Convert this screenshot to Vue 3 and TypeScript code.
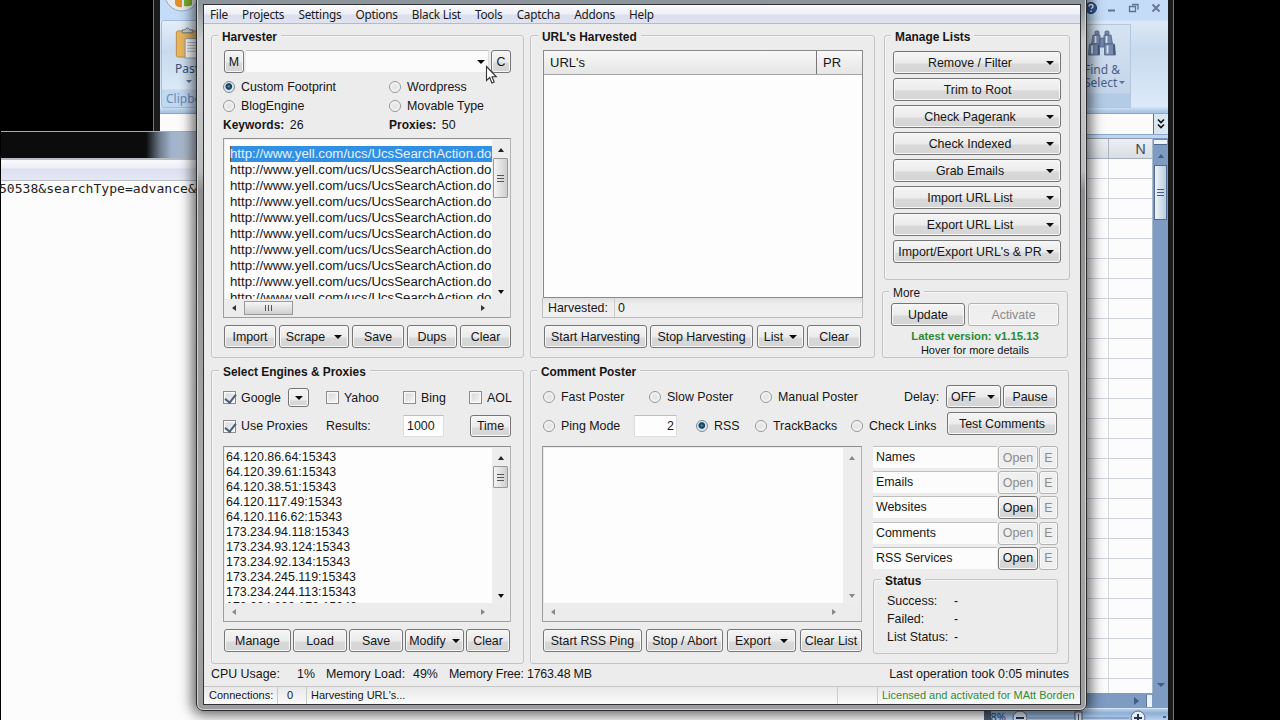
<script setup lang="ts">
interface ManageAction { label: string; menu: boolean }
interface FileRow { label: string; enabled: boolean }

const menus: string[] = ['File', 'Projects', 'Settings', 'Options', 'Black List', 'Tools', 'Captcha', 'Addons', 'Help']
const urls: string[] = Array.from({ length: 10 }, () => 'http://www.yell.com/ucs/UcsSearchAction.do')
const proxies: string[] = [
  '64.120.86.64:15343', '64.120.39.61:15343', '64.120.38.51:15343', '64.120.117.49:15343',
  '64.120.116.62:15343', '173.234.94.118:15343', '173.234.93.124:15343', '173.234.92.134:15343',
  '173.234.245.119:15343', '173.234.244.113:15343', '173.234.232.173:15343',
]
const manage: ManageAction[] = [
  { label: 'Remove / Filter', menu: true },
  { label: 'Trim to Root', menu: false },
  { label: 'Check Pagerank', menu: true },
  { label: 'Check Indexed', menu: true },
  { label: 'Grab Emails', menu: true },
  { label: 'Import URL List', menu: true },
  { label: 'Export URL List', menu: true },
  { label: "Import/Export URL's & PR", menu: true },
]
const files: FileRow[] = [
  { label: 'Names', enabled: false },
  { label: 'Emails', enabled: false },
  { label: 'Websites', enabled: true },
  { label: 'Comments', enabled: false },
  { label: 'RSS Services', enabled: true },
]
</script>

<template>
  <div class="desktop">
    <!-- Spreadsheet window -->
    <div class="excel">
      <div class="ribbon">
        <div class="clip-group">
          <svg class="orb" width="36" height="24" viewBox="0 0 36 24">
            <circle cx="18" cy="-6" r="17" fill="#e9ecef" stroke="#9aa9bd" />
            <path d="M11 0h7v7q-5 1-7-3z" fill="#e0912a" /><path d="M20 0h8v5q-4 2-8 1z" fill="#7fae2f" />
          </svg>
          <svg class="paste-icon" width="26" height="34" viewBox="0 0 26 34">
            <rect x="1" y="4" width="23" height="27" rx="2" fill="#e8b65c" stroke="#c08c3b" />
            <path d="M7 6V3h3q2-4 5 0h3v3z" fill="#c9cdd2" stroke="#6d7278" />
            <path d="M10 12h15v20H10z" fill="#fbfcfe" stroke="#8c9cb0" />
            <path d="M12 16h12M12 19h12M12 22h12M12 25h12" stroke="#b2bdca" />
          </svg>
          <span class="paste">Paste</span>
          <i class="tri tiny" />
          <span class="clipb">Clipboard</span>
        </div>
        <div class="ribbon-right">
          <div class="win-ctl">
            <svg width="90" height="16" viewBox="0 0 90 16">
              <circle cx="8" cy="8" r="5.5" fill="#315a9b" stroke="#1d3c74" />
              <path d="M6 6.5q0-2 2-2t2 2q0 1-2 2.2M8 10.5v1.4" fill="none" stroke="#fff" stroke-width="1.4" />
              <path d="M25 10.5h7" stroke="#5d7396" stroke-width="2" />
              <path d="M49 4.5h6v5M46.500 6.500h6v5h-6z" fill="none" stroke="#5d7396" stroke-width="1.300" />
              <path d="M69.500 4.500l7 7M76.500 4.500l-7 7" stroke="#66758c" stroke-width="1.800" />
            </svg>
          </div>
          <div class="find-panel">
            <svg width="32" height="28" viewBox="0 0 32 28">
              <g fill="#7589aa" stroke="#4f628a" stroke-width=".8">
                <rect x="8" y="1" width="4" height="4" rx="1" /><rect x="18" y="1" width="4" height="4" rx="1" />
                <path d="M6 5h7v9H4.500z" /><path d="M17 5h7l1.500 9H17z" />
                <path d="M2.500 14h10v11h-11z" /><path d="M17.500 14h10l1 11h-11z" />
                <path d="M13 8h4v9h-4z" />
              </g>
              <path d="M5 15.500v8M20.500 15.500v8M8.500 6v7M19.500 6v7" stroke="#dbe4f1" stroke-width="1.800" />
              <path d="M11.500 15v9.500M27 15v9.500" stroke="#3d5078" stroke-width="1.500" />
            </svg>
            <span>Find &amp;</span>
            <span class="sel">Select <i class="tri tiny" /></span>
          </div>
        </div>
      </div>
      <div class="formula"><b><svg width="10" height="12" viewBox="0 0 10 12"><path d="M2 1.500l3 3 3-3M2 6.500l3 3 3-3" fill="none" stroke="#111" stroke-width="1.600" /></svg></b></div>
      <div class="sheet">
        <div class="cells"><div class="head">N</div></div>
        <div class="vbar">
          <div class="split" />
          <i class="tri up blue" />
          <div class="vthumb"><i /><i /><i /></div>
          <i class="tri blue down" />
        </div>
      </div>
      <div class="hbar"><i class="rt" /><b /></div>
      <div class="zoom-bar">
        <span>8%</span>
        <svg width="170" height="12" viewBox="0 0 170 12">
          <circle cx="20" cy="9" r="7" fill="#e0e8f3" stroke="#54688a" /><path d="M16 9h8" stroke="#24364f" stroke-width="2" />
          <path d="M28 9h101" stroke="#6a82a8" />
          <rect x="75" y="3" width="7" height="10" fill="#d5deea" stroke="#43536c" /><path d="M78.500 5v6" stroke="#43536c" />
          <circle cx="138" cy="9" r="7" fill="#e6edf6" stroke="#54688a" /><path d="M134 9h8M138 5v8" stroke="#24364f" stroke-width="2" />
          <path d="M163 8h3" stroke="#4d6488" stroke-width="2" />
        </svg>
      </div>
    </div>

    <!-- Text editor window -->
    <div class="notepad">
      <div class="np-title" />
      <div class="np-menu" />
      <div class="np-body">50538&amp;searchType=advance&amp;</div>
    </div>

    <!-- Main application window -->
    <div class="frame">
      <div class="client">
        <nav class="menubar"><span v-for="m in menus" :key="m">{{ m }}</span></nav>

        <main class="body">
          <section class="group harvester">
            <h3>Harvester</h3>
            <div class="combo-row">
              <button>M</button>
              <div class="combo"><i class="tri" /></div>
              <button>C</button>
            </div>
            <div class="options">
              <label><i class="radio on" />Custom Footprint</label>
              <label><i class="radio" />Wordpress</label>
              <label><i class="radio" />BlogEngine</label>
              <label><i class="radio" />Movable Type</label>
              <p><b>Keywords:</b> 26</p>
              <p><b>Proxies:</b> 50</p>
            </div>
            <div class="list urls">
              <div class="lines"><div v-for="(u, i) in urls" :key="i" :class="{ picked: i === 0 }">{{ u }}</div></div>
              <div class="vs"><i class="tri up small" /><div class="thumb"><s /><s /><s /></div><i class="tri small end" /></div>
              <div class="hs"><i class="lt" /><div class="hthumb"><s /><s /><s /></div><i class="rt" /></div>
            </div>
            <div class="btns b1">
              <button>Import</button><button class="dd">Scrape<i class="tri" /></button><button>Save</button><button>Dups</button><button>Clear</button>
            </div>
          </section>

          <section class="group harvested">
            <h3>URL's Harvested</h3>
            <div class="table">
              <div class="thead"><span>URL's</span><span>PR</span></div>
            </div>
            <div class="count"><span>Harvested:</span><span>0</span></div>
            <div class="btns b2">
              <button>Start Harvesting</button><button>Stop Harvesting</button><button class="dd">List<i class="tri" /></button><button>Clear</button>
            </div>
          </section>

          <div class="side">
            <section class="group manage">
              <h3>Manage Lists</h3>
              <button v-for="a in manage" :key="a.label" :class="{ menu: a.menu }"><span>{{ a.label }}</span><i v-if="a.menu" class="tri" /></button>
            </section>
            <section class="group more">
              <h3>More</h3>
              <div class="more-btns"><button>Update</button><button disabled>Activate</button></div>
              <strong>Latest version: v1.15.13</strong>
              <em>Hover for more details</em>
            </section>
          </div>

          <section class="group engines">
            <h3>Select Engines &amp; Proxies</h3>
            <div class="checks">
              <label><i class="check on" />Google</label>
              <button><i class="tri" /></button>
              <label><i class="check" />Yahoo</label>
              <label><i class="check" />Bing</label>
              <label><i class="check" />AOL</label>
            </div>
            <div class="checks second">
              <label class="wide"><i class="check on" />Use Proxies</label>
              <span>Results:</span>
              <div class="field">1000</div>
              <button>Time</button>
            </div>
            <div class="list proxies">
              <div class="lines"><div v-for="p in proxies" :key="p">{{ p }}</div></div>
              <div class="vs"><i class="tri up small" /><div class="thumb short"><s /><s /><s /></div><i class="tri small end" /></div>
              <div class="hs dim"><i class="lt" /><i class="rt" /></div>
            </div>
            <div class="btns b3">
              <button>Manage</button><button>Load</button><button>Save</button><button class="dd tight">Modify<i class="tri" /></button><button>Clear</button>
            </div>
          </section>

          <section class="group poster">
            <h3>Comment Poster</h3>
            <div class="modes">
              <div class="mode-rows">
                <div class="mr1">
                  <label><i class="radio" />Fast Poster</label>
                  <label><i class="radio" />Slow Poster</label>
                  <label><i class="radio" />Manual Poster</label>
                  <span>Delay:</span>
                </div>
                <div class="mr2">
                  <label><i class="radio" />Ping Mode</label>
                  <div class="field num">2</div>
                  <label><i class="radio on" />RSS</label>
                  <label><i class="radio" />TrackBacks</label>
                  <label><i class="radio" />Check Links</label>
                </div>
              </div>
              <div class="mode-btns">
                <button class="off">OFF<i class="tri" /></button><button>Pause</button>
                <button class="test">Test Comments</button>
              </div>
            </div>
            <div class="poster-main">
              <div class="poster-left">
                <div class="list blank">
                  <div class="lines" />
                  <div class="vs dim"><i class="tri up small" /><i class="tri small end" /></div>
                  <div class="hs dim"><i class="lt" /><i class="rt" /></div>
                </div>
                <div class="btns b4">
                  <button>Start RSS Ping</button><button>Stop / Abort</button><button class="dd">Export<i class="tri" /></button><button>Clear List</button>
                </div>
              </div>
              <div class="poster-right">
                <div class="files">
                  <template v-for="f in files" :key="f.label">
                    <div class="fname">{{ f.label }}</div>
                    <button :disabled="!f.enabled">Open</button>
                    <button disabled>E</button>
                  </template>
                </div>
                <section class="group status">
                  <h3>Status</h3>
                  <dl>
                    <dt>Success:</dt><dd>-</dd>
                    <dt>Failed:</dt><dd>-</dd>
                    <dt>List Status:</dt><dd>-</dd>
                  </dl>
                </section>
              </div>
            </div>
          </section>
        </main>

        <div class="usage">
          <span>CPU Usage:</span><span>1%</span><span>Memory Load:</span><span>49%</span><span class="free">Memory Free: 1763.48 MB</span><span>Last operation took 0:05 minutes</span>
        </div>
        <footer class="statusbar">
          <span>Connections:</span><span>0</span><span>Harvesting URL's...</span><span /><span class="lic">Licensed and activated for MAtt Borden</span>
        </footer>
      </div>
    </div>

    <svg class="cursor" width="14" height="20" viewBox="0 0 14 20">
      <path d="M1.500 1.500v14l3.200-3 2.200 5.500 2.300-1-2.200-5.200h4.300z" fill="#fff" stroke="#333" stroke-width="1.100" />
    </svg>
  </div>
</template>

<style>
body { margin: 0; background: #000; overflow: hidden; }
</style>

<style scoped>
* { box-sizing: border-box; }
.desktop { position: relative; width: 1280px; height: 720px; overflow: hidden; background: #000; font: 12.4px/16px "Liberation Sans", Arial, sans-serif; color: #161616; }
h3, p, dl, dd { margin: 0; }
i { font-style: normal; }

/* arrows */
.tri { display: inline-block; width: 0; height: 0; border: 4px solid transparent; border-top-color: #0c0c0c; border-bottom: 0; flex: none; }
.tri.small { border-width: 4px 3.500px 0; }
.tri.up { border-width: 0 3.500px 4px; border-bottom: 4px solid #222; border-top: 0; }
.tri.tiny { border-width: 3px 3px 0; border-top-color: #58739d; }
.tri.blue { border-top-color: #3f5d8b; }
.tri.up.blue { border-bottom-color: #3f5d8b; }
.lt, .rt { width: 0; height: 0; border: 3.500px solid transparent; flex: none; }
.lt { border-right: 4px solid #333; border-left: 0; }
.rt { border-left: 4px solid #333; border-right: 0; }
.dim .lt { border-right-color: #888; }
.dim .rt { border-left-color: #888; }
.dim .tri.small { border-top-color: #888; }
.dim .tri.up { border-bottom-color: #888; }

/* spreadsheet */
.excel { position: absolute; left: 153px; top: -4px; width: 1021px; height: 740px; border: solid #1b1b1b; border-width: 0 6px 0 7px; outline: 1px solid #777; outline-offset: -1px; background: #bfd4ee; padding-top: 4px; font-family: "Noto Sans", sans-serif; }
.ribbon { height: 113px; display: flex; justify-content: space-between; background: linear-gradient(#c4dcf8 0 20px, #dbe8f6 21px, #c9daee 50px, #dceafa 106px, #a9c5e5 112px); }
.clip-group { width: 120px; height: 88px; margin: 20px 0 0 1px; border: 1px solid #a4bddb; border-radius: 3px; background: linear-gradient(#e4eef9, #c8daee 30px, #dbe9f7 68px, #c0d8f0 69px); display: flex; flex-direction: column; align-items: flex-start; position: relative; color: #35517f; }
.orb { position: absolute; left: 2px; top: -21px; }
.paste-icon { margin: 6px 0 0 13px; }
.paste { margin: 1px 0 0 13px; font-size: 12px; }
.clip-group > .tri { margin: 3px 0 0 24px; }
.clipb { margin: 8px 0 0 4px; font-size: 12px; color: #6b8ab8; }
.ribbon-right { width: 85px; }
.win-ctl { height: 24px; margin-left: 0; }
.find-panel { width: 48px; height: 84px; border: 1px solid #b5c7dc; background: linear-gradient(#d6e3f2, #c3d5ea 68px, #b3cbe5 69px); display: flex; flex-direction: column; font-size: 12px; line-height: 13px; color: #4b6189; }
.find-panel svg { margin: 5px 0 5px 3px; }
.find-panel span { white-space: nowrap; }
.find-panel .sel .tri { margin: 0 0 3px -1px; }
.formula { height: 22px; border: solid #8ba7c9; border-width: 1px 0; background: #fbfbfb; display: flex; justify-content: flex-end; }
.formula b { width: 15px; border-left: 1px solid #56719a; background: #dbe6f3; display: flex; align-items: center; justify-content: center; }
.sheet { height: 558px; padding-top: 3px; display: grid; grid-template-columns: 1fr 15px; }
.cells { border-right: 1px solid #a9b9cc; border-top: 1px solid #8f9baa; background:
  linear-gradient(#d3d9e1, #d3d9e1) 948px 0 / 1px 100% no-repeat,
  repeating-linear-gradient(#fcfcfd 0 19px, #cdd2d9 19px 20px); }
.head { height: 20px; padding: 0 6px 0 0; text-align: right; font: 14px/19px "Noto Sans", sans-serif; color: #444; border-bottom: 1px solid #a6b0bd; background: linear-gradient(90deg, transparent 948px, #aab3bf 948px 949px, transparent 949px), linear-gradient(#eceff2, #d9dee4); }
.vbar { background: #7e9bc2; display: flex; flex-direction: column; align-items: center; }
.split { width: 13px; height: 6px; margin-top: 1px; background: #eef3f9; border-bottom: 1px solid #4d6993; border-top: 1px solid #6e8ab2; }
.vbar .up { margin-top: 9px; }
.vthumb { width: 13px; height: 55px; margin-top: 7px; border: 1px solid #516c96; background: linear-gradient(90deg, #f0f4fa, #b9cbe0); display: flex; flex-direction: column; align-items: center; justify-content: center; gap: 2px; }
.vthumb i { width: 7px; height: 1px; background: #435c84; }
.vbar .down { margin-top: auto; margin-bottom: 6px; }
.hbar { height: 15px; background: #7e9bc2; display: flex; justify-content: flex-end; align-items: center; padding-right: 16px; gap: 7px; }
.hbar .rt { border-width: 4px 0 4px 5px; border-left-color: #3f5d8b; }
.hbar b { width: 6px; height: 12px; background: #edf3fa; border-left: 1px solid #5d789f; }
.zoom-bar { height: 20px; background: linear-gradient(#b9d0ec, #8daed6 4px, #bfd5ef 12px); border-top: 1px solid #d8e6f6; display: flex; justify-content: flex-end; padding-right: 0; font-size: 11px; color: #244272; }
.zoom-bar svg { margin-left: -6px; margin-right: -2px; }
.zoom-bar span { line-height: 15px; }

/* text editor */
.notepad { position: absolute; left: 1px; top: 131px; width: 990px; height: 600px; border: 1px solid #aaa; border-width: 1px 7px 0 0; border-right-color: #4a5a72; background: #fcfcfc; }
.np-title { height: 28px; border-bottom: 2px solid #b8bcc2; background: linear-gradient(90deg, #0c0c0c 145px, #6f7c8c 159px, #9fb2cb 170px, #b7c2d1 196px); }
.np-menu { height: 21px; background: linear-gradient(#fafafd, #eceef7 8px, #dcdff0 9px, #e3e6f3 18px); border-bottom: 1px solid #b9bcc9; }
.np-body { margin-left: -2px; font: 13.080px/15px "DejaVu Sans Mono", monospace; color: #222; white-space: pre; }

/* app window */
.frame { position: absolute; left: 196px; top: -20px; width: 891px; height: 731px; border: 1px solid #2a2a2a; border-radius: 0 0 7px 7px; padding: 23px 5px 7px 6px; background: linear-gradient(#8a9298 0, #8c959b 24px, #c9cbcc 60px, #b9babb 190px, #8e8e90 210px, #aaa 500px, #9c9c9e); box-shadow: inset 0 0 0 1px #d0d2d4, 0 0 13px 4px rgba(0, 0, 0, .6); }
.client { height: 701px; border: 1px solid #303236; background: #ececec; display: flex; flex-direction: column; }
.menubar { height: 19px; flex: none; display: flex; padding-left: 6px; gap: 14.200px; background: linear-gradient(#fbfbfd 0, #eef0f7 9px, #dbdfee 10px, #e0e4f1 18px); border-bottom: 1px solid #b6bac6; font: 11.800px/19px "Noto Sans", sans-serif; letter-spacing: -.25px; color: #1a1a1a; white-space: nowrap; }
.body { flex: none; height: 640px; padding: 11px 0 0 7px; display: grid; grid-template-columns: 312px 345px 187px; grid-template-rows: 323px 294px; column-gap: 7px; row-gap: 12px; }

.group { min-width: 0; border: 1px solid #c4c4c4; border-radius: 3px; padding: 0 11px; display: flex; flex-direction: column; box-shadow: inset 1px 1px 0 #f5f5f5; }
.group > h3 { align-self: flex-start; flex: none; height: 16px; margin: -7px 0 0 -5px; padding: 0 4px; background: #ececec; font: bold 11.900px/16px "Liberation Sans", Arial, sans-serif; white-space: nowrap; }

button { height: 23px; min-width: 0; padding: 0; border: 1px solid #757575; border-radius: 3px; background: linear-gradient(#f5f5f5 0, #ebebeb 11px, #d9d9d9 12px, #d4d4d4 22px); box-shadow: inset 0 0 0 1px #f8f8f8; font: inherit; color: #161616; white-space: nowrap; display: flex; align-items: center; justify-content: center; }
button:disabled { border-color: #b2b2b2; background: #efefef; color: #8b8b8b; }
button.dd { gap: 9px; }
button.tight { gap: 6px; }
.b2 .dd { gap: 6px; }
.btns { display: grid; margin-top: 7px; flex: none; }
.b1 { grid-template-columns: 52px 70px 52px 50px 51px; gap: 3px; padding-left: 1px; }
.b2 { grid-template-columns: 103px 103px 47px 54px; column-gap: 3px; padding-left: 1px; }
.b2 button:nth-child(n + 3) { transform: translateX(1px); }
.b3 { grid-template-columns: 67px 54px 54px 59px 44px; gap: 2px; padding-left: 1px; }
.b4 { grid-template-columns: 99px 77px 69px 62px; gap: 4px; padding-left: 1px; }

label { display: flex; align-items: center; gap: 6px; white-space: nowrap; }
.radio { width: 12px; height: 12px; flex: none; border: 1px solid #969696; border-radius: 50%; background: radial-gradient(#e6e6e6 30%, #fafafa 75%); }
.radio.on { border-color: #7b8b98; background: radial-gradient(circle at 48% 45%, #6fa3c0 0, #23516f 1.500px, #173c56 2.800px, #dce8ee 3.800px); }
.check { width: 13px; height: 13px; flex: none; border: 1px solid #8c8c8c; background: linear-gradient(135deg, #d2d4d6, #f7f7f7); box-shadow: inset 0 0 0 1.500px #f8f8f8; display: flex; }
.check.on::after { content: ""; width: 5px; height: 9px; margin: 0 0 0 3px; border: solid #4a5d7a; border-width: 0 2px 2px 0; transform: rotate(38deg); }

.combo-row { display: grid; grid-template-columns: 20px 243px 20px; gap: 2px; padding-left: 1px; margin-top: 5px; }
.combo { height: 22px; background: #fbfbfb; border-top: 1px solid #c2c2c2; border-right: 1px solid #ddd; display: flex; align-items: center; justify-content: flex-end; padding-right: 3px; }
.options { display: grid; grid-template-columns: 166px 1fr; grid-auto-rows: 19px; align-items: center; margin-top: 4px; height: 61px; flex: none; }
.options b { font-size: 12px; margin-right: 2px; }

.list { display: grid; grid-template-columns: 1fr 17px; grid-template-rows: 1fr 17px; border: 1px solid #9d9d9d; border-color: #8f8f8f #b4b4b4 #9f9f9f #9d9d9d; background: #ececec; padding: 1px; margin-top: 0; width: 288px; flex: none; }
.urls { height: 180px; margin-top: 0; }
.lines { background: #fdfdfd; overflow: hidden; min-width: 0; min-height: 0; white-space: nowrap; }
.urls .lines { padding: 6px 0 0 5px; font-size: 13.250px; line-height: 16px; }
.urls .lines div { height: 16px; }
.picked { background: #3290e4; color: #e6f2fc; border-left: 1px solid #6b4b20; text-indent: -1px; }
.proxies { height: 176px; }
.proxies .lines { padding: 2px 0 0 1px; line-height: 15px; }
.vs { background: #ededed; display: flex; flex-direction: column; align-items: center; padding: 8px 0 5px; }
.thumb { width: 15px; height: 40px; flex: none; margin-top: 6px; border: 1px solid #999; border-radius: 1px; background: linear-gradient(90deg, #f4f4f4, #cfcfcf); display: flex; flex-direction: column; align-items: center; justify-content: center; gap: 2px; }
.thumb.short { height: 22px; }
.thumb s { width: 7px; height: 1px; background: #555; }
.end { margin-top: auto; }
.hs { grid-column: 1 / 3; display: flex; align-items: center; padding: 0 24px 0 7px; }
.hs .rt { margin-left: auto; }
.hthumb { width: 49px; height: 14px; margin-left: 8px; border: 1px solid #999; background: linear-gradient(#f5f5f5, #d0d0d0); display: flex; align-items: flex-start; justify-content: center; gap: 2px; padding-top: 3px; }
.hthumb s { width: 1px; height: 6px; background: #555; }

.harvested { padding-left: 12px; }
.table { width: 320px; height: 248px; flex: none; margin-top: 5px; border: 1px solid #8a8a8a; background: #fdfdfd; }
.thead { height: 24px; display: grid; grid-template-columns: 272px 1fr; background: linear-gradient(#f8f8f8, #e5e5e5); border-bottom: 1px solid #a5a5a5; font-size: 13px; line-height: 23px; }
.thead span { padding-left: 6px; }
.thead span + span { border-left: 1px solid #777; }
.count { display: grid; grid-template-columns: 71px 1fr; height: 20px; width: 321px; margin-left: -1px; border: 1px solid #bdbdbd; border-top: 0; background: linear-gradient(#dedede, #eee 6px, #f0f0f0); line-height: 21px; flex: none; }
.count span { padding-left: 5px; }
.count span + span { border-left: 1px solid #ccc; padding-left: 3px; }

.side { display: flex; flex-direction: column; padding-left: 0; }
.manage { height: 245px; margin-left: 2px; width: 186px; padding: 0 8px; }
.manage h3 { margin-left: -2px; }
.manage button { flex: none; margin-bottom: 4px; width: 168px; padding-right: 0; }
.manage h3 + button { margin-top: 6px; }
.manage button.menu { padding-right: 5px; }
.manage button span { flex: 1; text-align: center; padding: 0 0 0 1px; }
.manage button.menu span { padding: 0; }
.manage .tri { margin-right: 1px; }
.more { height: 67px; width: 186px; margin-top: 11px; padding: 0 8px; text-align: center; }
.more h3 { font-weight: normal; margin-left: -2px; }
.more-btns { display: grid; grid-template-columns: 74px 91px; gap: 3px; margin: 2px 0 0; }
.more strong { color: #2a8a33; font-size: 11.300px; line-height: 14px; margin-top: 3px; white-space: nowrap; }
.more em { font-style: normal; font-size: 11px; line-height: 14px; color: #111; }

.engines, .harvester { margin-right: -1px; }
.engines h3 { margin-left: -4px; }
.checks { display: grid; grid-template-columns: 65px 38px 77px 66px 1fr; align-items: center; height: 19px; margin-top: 8px; flex: none; }
.checks label { gap: 5px; }
.checks button { width: 21px; height: 19px; }
.checks.second { grid-template-columns: 103px 77px 67px 41px; height: 22px; margin: 8px 0 9px; }
.second button { width: 41px; height: 22px; }
.field { height: 22px; width: 41px; background: #fdfdfd; border: 1px solid #ddd; border-top-color: #bdbdbd; padding: 0 3px; line-height: 21px; }
.num { width: 43px; text-align: right; padding-right: 2px; }

.poster { grid-column: 2 / 4; padding-left: 11px; }
.modes { display: flex; height: 66px; flex: none; }
.mode-rows { width: 404px; flex: none; }
.mr1, .mr2 { display: grid; align-items: center; height: 22px; }
.mr1 { margin-top: 6px; padding-left: 1px; grid-template-columns: 106px 111px 144px 1fr; }
.mr2 { margin-top: 7px; padding-left: 1px; grid-template-columns: 91px 62px 59px 96px 1fr; }
.mode-btns { display: grid; grid-template-columns: 55px 54px; grid-template-rows: 23px 23px; gap: 4px 2px; padding-top: 5px; }
.mode-btns .off { justify-content: space-between; padding: 0 5px 0 4px; }
.test { grid-column: 1 / 3; margin-left: 1px; }
.poster-main { display: grid; grid-template-columns: 320px 185px; gap: 11px; }
.blank { width: 320px; height: 176px; }
.files { display: grid; grid-template-columns: 124px 40px 19px; grid-auto-rows: 23px; gap: 2.200px 1px; }
.fname { height: 22px; background: #fcfcfc; border-top: 1px solid #c0c0c0; padding: 2px 0 0 3px; line-height: 17px; }
.status { width: 185px; height: 75px; margin-top: 9px; padding-left: 13px; }
.status h3 { margin-left: -6px; }
.status dl { display: grid; grid-template-columns: 67px 1fr; line-height: 18px; margin-top: 3px; }

.usage { height: 22px; flex: none; display: grid; grid-template-columns: 86px 29px 87px 36px 1fr auto; padding: 0 11px 0 7px; line-height: 20px; white-space: nowrap; }
.free { letter-spacing: -.2px; }
.statusbar { flex: 1; display: grid; grid-template-columns: 73px 29px 531px 40px 1fr; border-top: 1px solid #c6c6c6; background: linear-gradient(#e8e8e8, #fafafa); font-size: 11px; line-height: 17px; padding-left: 1px; white-space: nowrap; }
.statusbar span { padding-left: 4px; border-right: 1px solid #ccc; }
.statusbar span:nth-child(2) { padding-left: 9px; }
.statusbar .lic { color: #328a3a; border: 0; }

.cursor { position: absolute; left: 485px; top: 65px; }
</style>
